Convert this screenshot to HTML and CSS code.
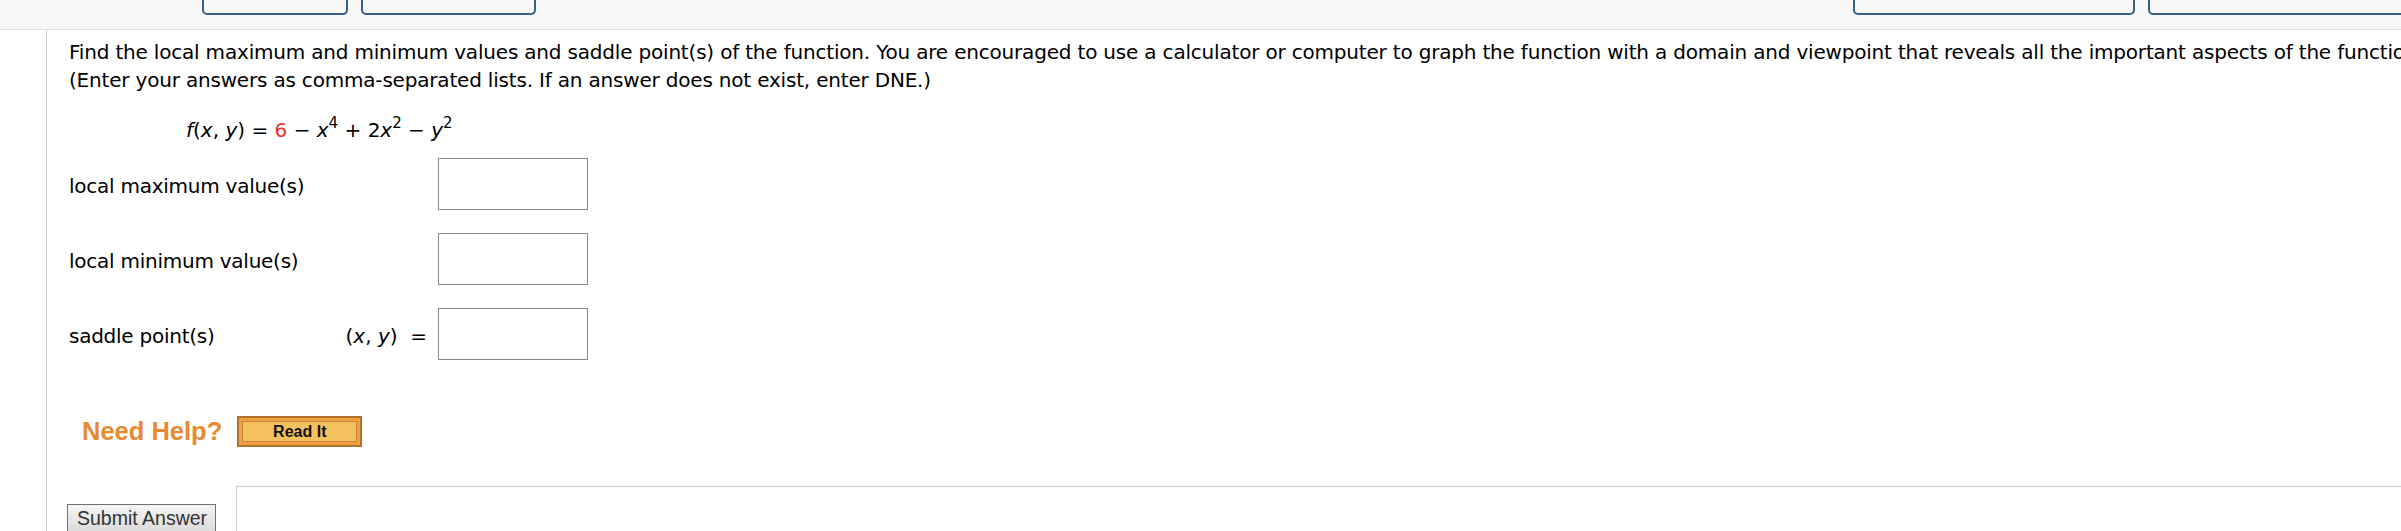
FILE: index.html
```html
<!DOCTYPE html>
<html lang="en">
<head>
<meta charset="utf-8">
<title>Question</title>
<link rel="stylesheet" href="styles.css">
</head>
<body>
<div class="topbar">
  <div class="tabs tabs-left">
    <span class="tab tab1"></span>
    <span class="tab tab2"></span>
  </div>
  <div class="tabs tabs-right">
    <span class="tab tab3"></span>
    <span class="tab tab4"></span>
  </div>
</div>
<div class="main">
  <p class="question">Find the local maximum and minimum values and saddle point(s) of the function. You are encouraged to use a calculator or computer to graph the function with a domain and viewpoint that reveals all the important aspects of the function.<br>(Enter your answers as comma-separated lists. If an answer does not exist, enter DNE.)</p>
  <div class="formula"><i>f</i>(<i>x</i>, <i>y</i>) = <span class="red">6</span> − <i>x</i><sup>4</sup> + 2<i>x</i><sup>2</sup> − <i>y</i><sup>2</sup></div>
  <div class="answers">
    <div class="row">
      <div class="label"><span>local maximum value(s)</span></div>
      <input class="box" type="text">
    </div>
    <div class="row">
      <div class="label"><span>local minimum value(s)</span></div>
      <input class="box" type="text">
    </div>
    <div class="row">
      <div class="label"><span>saddle point(s)</span><span class="xy">(<i>x</i>, <i>y</i>)&nbsp; =</span></div>
      <input class="box" type="text">
    </div>
  </div>
  <div class="help">
    <span class="need">Need Help?</span>
    <button class="readit" type="button"><span class="readit-inner">Read It</span></button>
  </div>
  <div class="submit-row">
    <button class="submit" type="button">Submit Answer</button>
    <div class="feedback"></div>
  </div>
</div>
</body>
</html>
```
FILE: styles.css
```css
html, body {
  margin: 0;
  padding: 0;
  overflow: hidden;
  background: #ffffff;
}
body {
  width: 2401px;
  height: 531px;
  font-family: "DejaVu Sans", Verdana, sans-serif;
  color: #000;
}
.topbar {
  height: 29px;
  background: #f7f7f7;
  border-bottom: 1px solid #dddddd;
  display: flex;
  align-items: flex-start;
}
.tabs {
  display: flex;
  gap: 13px;
}
.tabs-left {
  padding-left: 202px;
}
.tabs-right {
  margin-left: 1317px;
}
.tab {
  display: block;
  height: 15px;
  box-sizing: border-box;
  border: 2px solid #33608c;
  border-top: none;
  border-radius: 0 0 5px 5px;
  background: #f7f7f7;
}
.tab1 { width: 146px; }
.tab2 { width: 175px; }
.tab3 { width: 282px; }
.tab4 { width: 300px; }

.main {
  margin-left: 46px;
  border-left: 1px solid #cccccc;
  padding: 8px 0 0 22px;
  height: 501px;
  box-sizing: border-box;
  overflow: hidden;
}
.question {
  margin: 0;
  font-size: 20px;
  line-height: 28px;
  letter-spacing: -0.19px;
  white-space: nowrap;
}
.formula {
  margin: 22px 0 0 117px;
  font-size: 20px;
  line-height: 28px;
  white-space: nowrap;
}
.formula sup {
  font-size: 15px;
  line-height: 0;
  vertical-align: 9px;
}
.red {
  color: #e8302c;
}
.answers {
  margin-top: 14px;
  display: flex;
  flex-direction: column;
  gap: 23px;
}
.row {
  display: flex;
  align-items: center;
}
.label {
  width: 369px;
  display: flex;
  justify-content: space-between;
  box-sizing: border-box;
  padding-right: 11px;
  padding-top: 4px;
  font-size: 20px;
  line-height: 28px;
  letter-spacing: -0.25px;
}
.xy {
  letter-spacing: 0;
}
.box {
  width: 150px;
  height: 52px;
  box-sizing: border-box;
  border: 1px solid #8a8a8a;
  margin: 0;
  padding: 0;
  background: #fff;
}
.help {
  margin-top: 56px;
  display: flex;
  align-items: center;
  padding-left: 13px;
  gap: 15px;
}
.need {
  font-family: "Liberation Sans", Arial, sans-serif;
  font-weight: bold;
  font-size: 25.5px;
  color: #e88a32;
}
.readit {
  width: 125px;
  height: 31px;
  box-sizing: border-box;
  border: 2px solid #b0722f;
  background: #f0a03c;
  padding: 3px;
  margin: 0;
  display: flex;
}
.readit-inner {
  flex: 1;
  display: flex;
  align-items: center;
  justify-content: center;
  border: 1px solid #c4853a;
  background: #f3c25e;
  font-family: "Liberation Sans", Arial, sans-serif;
  font-weight: bold;
  font-size: 16px;
  color: #111;
}
.submit-row {
  margin-top: 39px;
  display: flex;
  align-items: flex-start;
}
.submit {
  margin: 18px 0 0 -2px;
  width: 149px;
  height: 28px;
  box-sizing: border-box;
  border: 1px solid #707070;
  background: linear-gradient(#f4f4f4, #dcdcdc);
  font-family: "Liberation Sans", Arial, sans-serif;
  font-size: 19.5px;
  line-height: 26px;
  color: #333;
  padding: 0 9px;
  text-align: left;
  white-space: nowrap;
}
.feedback {
  flex: 1;
  margin-left: 20px;
  height: 45px;
  border: 1px solid #cccccc;
  border-right: none;
  border-bottom: none;
}
```
